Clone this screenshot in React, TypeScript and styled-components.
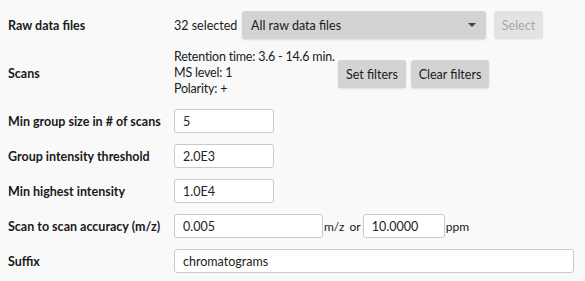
import styled, { createGlobalStyle } from 'styled-components';

const GlobalStyle = createGlobalStyle`
  html, body {
    margin: 0;
    padding: 0;
    background: #f9f9f9;
  }
  body {
    font-family: Lato, "Noto Sans", sans-serif;
    font-size: 12.5px;
    color: #1a1a1a;
  }
`;

const Form = styled.div`
  width: 585px;
  height: 281px;
  box-sizing: border-box;
  padding: 11px 12px 0 8px;
  display: flex;
  flex-direction: column;
`;

const Row = styled.div<{ $mt?: number; $h: number }>`
  display: flex;
  align-items: center;
  height: ${(p) => p.$h}px;
  margin-top: ${(p) => p.$mt ?? 0}px;
  flex-shrink: 0;
`;

const Label = styled.div`
  width: 166px;
  flex-shrink: 0;
  font-weight: 700;
  white-space: nowrap;
`;

const Count = styled.span`
  width: 68px;
  white-space: nowrap;
`;

const Dropdown = styled.div`
  width: 244px;
  height: 28px;
  box-sizing: border-box;
  background: #d3d3d3;
  border-radius: 3px;
  box-shadow: 0 1px 2px rgba(0, 0, 0, 0.12);
  display: flex;
  align-items: center;
  justify-content: space-between;
  padding: 0 10px 0 9px;
`;

const Caret = styled.span`
  width: 0;
  height: 0;
  border-left: 4px solid transparent;
  border-right: 4px solid transparent;
  border-top: 4px solid #444;
`;

const Button = styled.button<{ $w: number; $disabled?: boolean }>`
  font: inherit;
  width: ${(p) => p.$w}px;
  height: 28px;
  border: none;
  border-radius: 3px;
  background: ${(p) => (p.$disabled ? '#e3e3e3' : '#d3d3d3')};
  color: ${(p) => (p.$disabled ? '#a9a9a9' : '#1a1a1a')};
  box-shadow: 0 1px 2px rgba(0, 0, 0, ${(p) => (p.$disabled ? 0.06 : 0.12)});
  padding: 0;
  margin-left: ${(p) => (p.$disabled ? 8 : 0)}px;
`;

const ScanInfo = styled.div`
  line-height: 16px;
  width: 164px;
  white-space: nowrap;
  letter-spacing: -0.2px;
`;

const ButtonGroup = styled.div`
  display: flex;
  gap: 5px;
  margin-top: 2px;
`;

const Input = styled.div<{ $w: number }>`
  width: ${(p) => p.$w}px;
  height: 24px;
  flex-shrink: 0;
  box-sizing: border-box;
  background: #fff;
  border: 1px solid #cacaca;
  border-radius: 3px;
  padding: 0 8px;
  display: flex;
  align-items: center;
  color: #222;
`;

const Unit = styled.span<{ $ml?: number; $mr?: number }>`
  font-size: 12px;
  margin-left: ${(p) => p.$ml ?? 0}px;
  margin-right: ${(p) => p.$mr ?? 0}px;
`;

export default function App() {
  return (
    <>
      <GlobalStyle />
      <Form>
        <Row $h={28}>
          <Label>Raw data files</Label>
          <Count>32 selected</Count>
          <Dropdown>
            <span>All raw data files</span>
            <Caret />
          </Dropdown>
          <Button $w={49} $disabled>
            Select
          </Button>
        </Row>

        <Row $h={48} $mt={10}>
          <Label>Scans</Label>
          <ScanInfo>
            <div>Retention time: 3.6 - 14.6 min.</div>
            <div>MS level: 1</div>
            <div>Polarity: +</div>
          </ScanInfo>
          <ButtonGroup>
            <Button $w={68}>Set filters</Button>
            <Button $w={78}>Clear filters</Button>
          </ButtonGroup>
        </Row>

        <Row $h={24} $mt={12}>
          <Label>Min group size in # of scans</Label>
          <Input $w={100}>5</Input>
        </Row>

        <Row $h={24} $mt={11}>
          <Label>Group intensity threshold</Label>
          <Input $w={100}>2.0E3</Input>
        </Row>

        <Row $h={24} $mt={11}>
          <Label>Min highest intensity</Label>
          <Input $w={100}>1.0E4</Input>
        </Row>

        <Row $h={24} $mt={11}>
          <Label>Scan to scan accuracy (m/z)</Label>
          <Input $w={149}>0.005</Input>
          <Unit $ml={1}>m/z</Unit>
          <Unit $ml={5} $mr={2}>or</Unit>
          <Input $w={82}>10.0000</Input>
          <Unit $ml={1}>ppm</Unit>
        </Row>

        <Row $h={24} $mt={11}>
          <Label>Suffix</Label>
          <Input $w={400}>chromatograms</Input>
        </Row>
      </Form>
    </>
  );
}
